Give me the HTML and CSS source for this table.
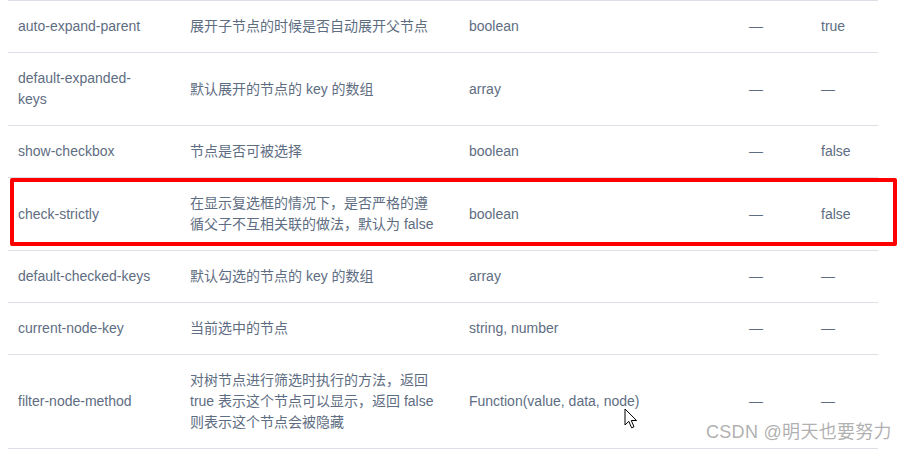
FILE: index.html
```html
<!DOCTYPE html>
<html lang="zh">
<head>
<meta charset="utf-8">
<title>Tree Attributes</title>
<link rel="stylesheet" href="styles.css">
</head>
<body>
<div class="page">
  <table class="attr-table">
    <colgroup>
      <col class="c-name"><col class="c-desc"><col class="c-type"><col class="c-opt"><col class="c-def">
    </colgroup>
    <tbody>
      <tr><td>auto-expand-parent</td><td>展开子节点的时候是否自动展开父节点</td><td>boolean</td><td>—</td><td>true</td></tr>
      <tr><td>default-expanded-keys</td><td>默认展开的节点的 key 的数组</td><td>array</td><td>—</td><td>—</td></tr>
      <tr><td>show-checkbox</td><td>节点是否可被选择</td><td>boolean</td><td>—</td><td>false</td></tr>
      <tr><td>check-strictly</td><td>在显示复选框的情况下，是否严格的遵循父子不互相关联的做法，默认为 false</td><td>boolean</td><td>—</td><td>false</td></tr>
      <tr><td>default-checked-keys</td><td>默认勾选的节点的 key 的数组</td><td>array</td><td>—</td><td>—</td></tr>
      <tr><td>current-node-key</td><td>当前选中的节点</td><td>string, number</td><td>—</td><td>—</td></tr>
      <tr><td>filter-node-method</td><td>对树节点进行筛选时执行的方法，返回 true 表示这个节点可以显示，返回 false 则表示这个节点会被隐藏</td><td>Function(value, data, node)</td><td>—</td><td>—</td></tr>
    </tbody>
  </table>
  <div class="highlight"></div>
  <svg class="cursor" width="14" height="22" viewBox="0 0 14 22">
    <path d="M1 1 L1 17 L4.8 13.3 L7.6 19.8 L10 18.8 L7.3 12.5 L12.6 12.5 Z" fill="#fff" stroke="#000" stroke-width="1" stroke-linejoin="miter"/>
  </svg>
  <div class="watermark">CSDN @明天也要努力</div>
</div>
</body>
</html>
```
FILE: styles.css
```css
html, body {
  margin: 0;
  padding: 0;
  background: #fff;
}
.page {
  position: relative;
  width: 911px;
  height: 450px;
  overflow: hidden;
  padding: 0 8px;
  box-sizing: border-box;
  font-family: "Liberation Sans", Arial, "Noto Sans CJK SC", sans-serif;
}
.attr-table {
  border-collapse: collapse;
  table-layout: fixed;
  width: 870px;
  border-top: 1px solid #dcdfe6;
  font-size: 14px;
  line-height: 21px;
  color: #5e6d82;
}
.c-name { width: 167px; }
.c-desc { width: 279px; }
.c-type { width: 280px; }
.c-opt { width: 72px; }
.c-def { width: 72px; }
.attr-table td {
  padding: 15px;
  border-bottom: 1px solid #dcdfe6;
  vertical-align: middle;
  text-align: left;
  word-wrap: break-word;
}
.attr-table td:first-child {
  padding-left: 10px;
  padding-right: 20px;
}
.highlight {
  position: absolute;
  left: 10px;
  top: 178px;
  width: 887px;
  height: 68px;
  box-sizing: border-box;
  border: 4px solid #ff0000;
  border-radius: 2px;
}
.cursor {
  position: absolute;
  left: 624px;
  top: 408px;
}
.watermark {
  position: absolute;
  left: 706px;
  top: 420px;
  font-size: 18px;
  line-height: 24px;
  color: rgba(150, 150, 150, 0.75);
  white-space: nowrap;
  letter-spacing: 0.3px;
}
```
